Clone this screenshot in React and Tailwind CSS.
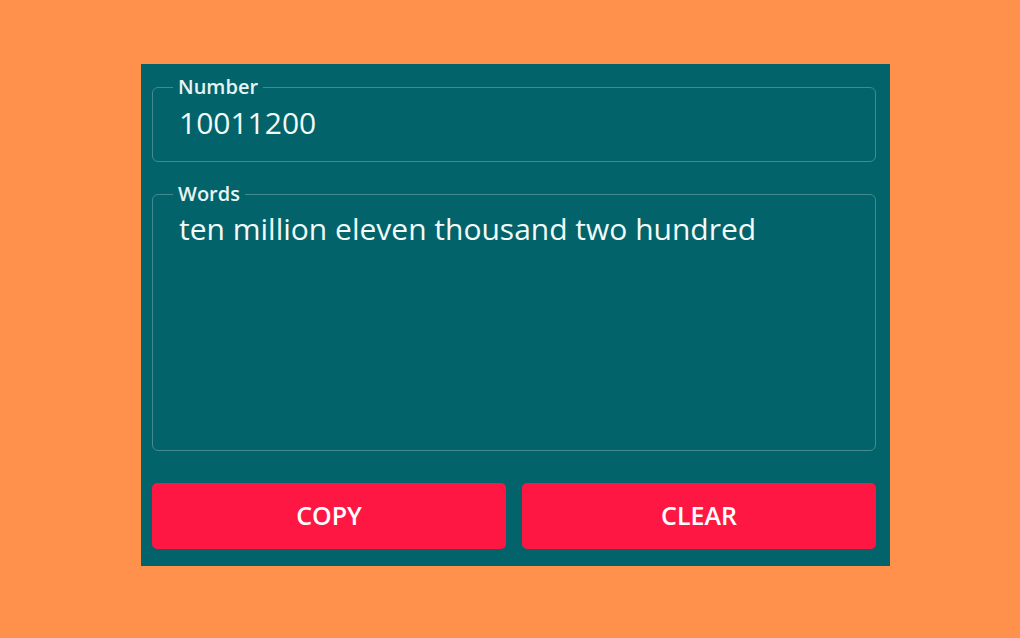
import { useState } from "react";

const font = { fontFamily: '"Open Sans", "Noto Sans", sans-serif' };

function App() {
    const [num, setNum] = useState("10011200");
    const [words, setWords] = useState("ten million eleven thousand two hundred");

    const handleCopy = () => {
        navigator.clipboard?.writeText(words).catch(() => {});
    };

    const handleClear = () => {
        setNum("");
        setWords("");
    };

    return (
        <div className="w-[1020px] h-[638px] bg-[#ff914d] pt-[64px] pl-[141px]" style={font}>
            <div className="w-[749px] h-[502px] bg-[#02636a] pl-[11px] pr-[14px] pt-[11px] flex flex-col">
                <fieldset className="border border-[#458a8e] rounded-[6px] h-[87px] pl-[26px] pr-[19px] pb-2">
                    <legend className="-ml-[6px] px-[5px] text-[20px] leading-[24px] font-semibold text-[#e8f4f2]">Number</legend>
                    <input
                        className="w-full bg-transparent outline-none text-[30px] leading-[36px] text-[#f2fbf9] mt-[6px]"
                        value={num}
                        onChange={(e) => setNum(e.target.value)}
                    />
                </fieldset>
                <fieldset className="border border-[#458a8e] rounded-[6px] h-[269px] mt-[20px] pl-[26px] pr-[19px]">
                    <legend className="-ml-[6px] px-[5px] text-[20px] leading-[24px] font-semibold text-[#e8f4f2]">Words</legend>
                    <textarea
                        className="w-full h-[220px] mt-[4px] resize-none bg-transparent outline-none text-[30px] leading-[38px] text-[#f2fbf9]"
                        value={words}
                        onChange={(e) => setWords(e.target.value)}
                    />
                </fieldset>
                <div className="flex gap-[16px] mt-[32px]">
                    <button
                        onClick={handleCopy}
                        className="flex-1 h-[66px] rounded-[5px] bg-[#ff1744] text-white text-[25px] font-semibold"
                    >
                        COPY
                    </button>
                    <button
                        onClick={handleClear}
                        className="flex-1 h-[66px] rounded-[5px] bg-[#ff1744] text-white text-[25px] font-semibold"
                    >
                        CLEAR
                    </button>
                </div>
            </div>
        </div>
    );
}

export default App;
